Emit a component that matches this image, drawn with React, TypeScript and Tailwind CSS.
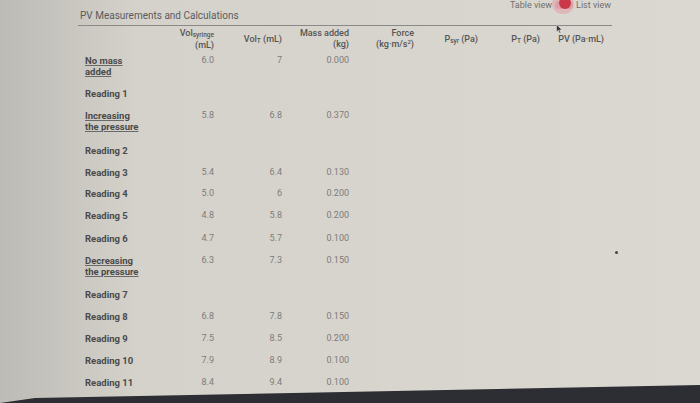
import React from "react";

type Row = { label: string[]; vals?: string[]; h: number; link?: boolean };

const rows: Row[] = [
  { label: ["No mass", "added"], vals: ["6.0", "7", "0.000"], h: 33, link: true },
  { label: ["Reading 1"], h: 22 },
  { label: ["Increasing", "the pressure"], vals: ["5.8", "6.8", "0.370"], h: 35, link: true },
  { label: ["Reading 2"], h: 22 },
  { label: ["Reading 3"], vals: ["5.4", "6.4", "0.130"], h: 21 },
  { label: ["Reading 4"], vals: ["5.0", "6", "0.200"], h: 22 },
  { label: ["Reading 5"], vals: ["4.8", "5.8", "0.200"], h: 23 },
  { label: ["Reading 6"], vals: ["4.7", "5.7", "0.100"], h: 22 },
  { label: ["Decreasing", "the pressure"], vals: ["6.3", "7.3", "0.150"], h: 34, link: true },
  { label: ["Reading 7"], h: 22 },
  { label: ["Reading 8"], vals: ["6.8", "7.8", "0.150"], h: 22 },
  { label: ["Reading 9"], vals: ["7.5", "8.5", "0.200"], h: 22 },
  { label: ["Reading 10"], vals: ["7.9", "8.9", "0.100"], h: 22 },
  { label: ["Reading 11"], vals: ["8.4", "9.4", "0.100"], h: 22 },
];

const cols = "grid grid-cols-[82px_54px_68px_67px_65px_64px_64px_70px]";

export default function App() {
  return (
    <div
      className="relative w-[700px] h-[403px] overflow-hidden bg-linear-to-r from-[#bdbbb6] via-[#d5d2cb] via-20% to-[#dbd8d1]"
      style={{ fontFamily: "Roboto, 'Liberation Sans', sans-serif" }}
    >
      <div className="flex flex-col h-[390px]">
        <div className="flex items-start justify-end h-[8px] pr-[89px]">
          <div className="flex items-center gap-[3px] text-[9px] leading-[10px] text-[#6f6f70]">
            <span>Table view</span>
            <span className="relative flex items-center w-[18px] h-[8px] rounded-full bg-[#d99aa0]">
              <span className="absolute -left-[3px] -top-[7px] w-[22px] h-[20px] rounded-full bg-[#e3a2a8]/60"></span>
              <span className="absolute left-[4px] -top-[4px] w-[12px] h-[12px] rounded-full bg-[#c9394a]"></span>
            </span>
            <span>List view</span>
          </div>
        </div>
        <div className="ml-[78px] w-[534px] mt-[-1px]">
          <div className="pl-[2px] text-[10px] leading-[14px] text-[#5b5b5c] h-[18px] flex items-center">
            PV Measurements and Calculations
          </div>
          <div className="h-[1px] bg-[#8a8987]"></div>
          <div className={`${cols} items-center h-[26px] text-[9px] leading-[11px] font-medium text-[#555] text-right`}>
            <div></div>
            <div>
              <div className="pb-[1px]">
                Vol<sub className="text-[6.5px]">syringe</sub>
              </div>
              <div>(mL)</div>
            </div>
            <div>
              Vol<sub className="text-[6.5px]">T</sub> (mL)
            </div>
            <div>
              <div>Mass added</div>
              <div>(kg)</div>
            </div>
            <div>
              <div>Force</div>
              <div>
                (kg·m/s<sup className="text-[6px]">2</sup>)
              </div>
            </div>
            <div>
              P<sub className="text-[6.5px]">syr</sub> (Pa)
            </div>
            <div className="pr-[2px]">
              P<sub className="text-[6.5px]">T</sub> (Pa)
            </div>
            <div className="pr-[8px]">PV (Pa·mL)</div>
          </div>
          <div className="pt-[3px]">
            {rows.map((r, i) => (
              <div key={i} className={`${cols} items-start`} style={{ height: r.h }}>
                <div className="pl-[7px] text-[9.5px] leading-[11px] font-bold text-[#4a4a4b]">
                  {r.label.map((l, j) => (
                    <div key={j} className={r.link ? "underline underline-offset-[1px] decoration-[#6a6a6a]" : ""}>
                      {l}
                    </div>
                  ))}
                </div>
                {r.vals &&
                  r.vals.map((v, j) => (
                    <div key={j} className="text-right text-[9px] leading-[11px] text-[#7c7c7c]">
                      {v}
                    </div>
                  ))}
              </div>
            ))}
          </div>
        </div>
      </div>
      <div className="absolute left-0 right-0 bottom-0 h-[20px] bg-[#2c2e33] [clip-path:polygon(0%_100%,5%_75%,100%_10%,100%_100%)]"></div>
      <svg className="absolute left-[556px] top-[24px]" width="7" height="10" viewBox="0 0 7 10">
        <path d="M0.5 0.5 L0.5 8 L2.3 6.3 L3.6 9.3 L4.8 8.8 L3.5 5.9 L6 5.9 Z" fill="#333" stroke="#eee" strokeWidth="0.5" />
      </svg>
      <span className="absolute left-[615px] top-[251px] w-[3px] h-[3px] rounded-full bg-[#444]"></span>
    </div>
  );
}
